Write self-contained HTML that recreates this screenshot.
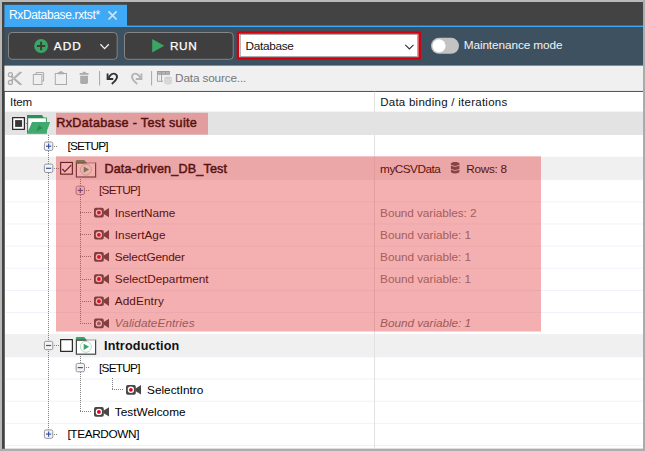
<!DOCTYPE html>
<html><head><meta charset="utf-8"><title>RxDatabase.rxtst</title>
<style>
html,body{margin:0;padding:0}
body{width:645px;height:451px;position:relative;overflow:hidden;background:#b9b9b9;font-family:"Liberation Sans",sans-serif;font-size:12px;color:#1e1e1e}

.t{position:absolute;white-space:nowrap;line-height:16px;height:16px}
svg{position:absolute;left:0;top:0;overflow:visible}
</style></head><body>
<svg width="645" height="451" viewBox="0 0 645 451">
<rect x="643.00" y="0.00" width="2.00" height="451.00" fill="#ababab"/>
<rect x="0.00" y="448.80" width="645.00" height="2.20" fill="#adadad"/>
<rect x="2.00" y="2.00" width="641.00" height="446.80" fill="#434343"/>
<rect x="4.40" y="4.80" width="122.60" height="22.00" fill="#3fa9f5"/>
<rect x="4.40" y="25.60" width="638.60" height="1.40" fill="#3fa9f5"/>
<rect x="4.40" y="27.00" width="638.60" height="38.60" fill="#3e5161"/>
<rect x="4.40" y="65.60" width="638.60" height="25.50" fill="#f0f0f0"/>
<rect x="4.40" y="90.95" width="638.60" height="1.05" fill="#585858"/>
<rect x="4.80" y="92.00" width="638.20" height="356.80" fill="#fff"/>
<rect x="5.00" y="111.60" width="638.00" height="23.40" fill="#e3e3e3"/>
<rect x="5.00" y="156.70" width="638.00" height="23.30" fill="#f0f0f0"/>
<rect x="5.00" y="334.10" width="638.00" height="23.00" fill="#f0f0f0"/>
<rect x="6.00" y="179.15" width="637.00" height="1.00" fill="#f0f2fa"/>
<rect x="6.00" y="201.30" width="637.00" height="1.00" fill="#f0f2fa"/>
<rect x="6.00" y="223.45" width="637.00" height="1.00" fill="#f0f2fa"/>
<rect x="6.00" y="245.60" width="637.00" height="1.00" fill="#f0f2fa"/>
<rect x="6.00" y="267.75" width="637.00" height="1.00" fill="#f0f2fa"/>
<rect x="6.00" y="289.90" width="637.00" height="1.00" fill="#f0f2fa"/>
<rect x="6.00" y="312.05" width="637.00" height="1.00" fill="#f0f2fa"/>
<rect x="6.00" y="356.35" width="637.00" height="1.00" fill="#f0f2fa"/>
<rect x="6.00" y="378.50" width="637.00" height="1.00" fill="#f0f2fa"/>
<rect x="6.00" y="400.65" width="637.00" height="1.00" fill="#f0f2fa"/>
<rect x="6.00" y="422.80" width="637.00" height="1.00" fill="#f0f2fa"/>
<rect x="6.00" y="444.95" width="637.00" height="1.00" fill="#f0f2fa"/>
<rect x="374.00" y="91.70" width="1.00" height="357.10" fill="#e2e2e2"/>
<rect x="8.5" y="32.5" width="108.7" height="26.8" rx="3.5" fill="#3f3f3f" stroke="#858585"/>
<rect x="124.5" y="32.5" width="108.7" height="26.8" rx="3.5" fill="#3f3f3f" stroke="#858585"/>
<path d="M108.5 11.4 L116.6 19.5 M116.6 11.4 L108.5 19.5" stroke="rgba(255,255,255,.72)" stroke-width="1.7" fill="none"/>
<circle cx="41.1" cy="46" r="6.9" fill="#3aa565"/>
<path d="M41.1 41.8 V50.2 M36.9 46 H45.3" stroke="#3a3f3c" stroke-width="2" fill="none"/>
<path d="M100.4 44.3 L104.6 48.6 L108.8 44.3" stroke="#f0f0f0" stroke-width="1.3" fill="none"/>
<path d="M152.2 39 L164.2 45.8 L152.2 52.6 Z" fill="#3aa565"/>
<rect x="238" y="32.6" width="181.6" height="25.8" fill="#fff" stroke="#d4000c" stroke-width="2.5"/>
<rect x="240.3" y="34.4" width="177.3" height="22" fill="#fff" stroke="#9a9a9a" stroke-width="0.8"/>
<path d="M405.3 44.8 L409.4 49 L413.5 44.8" stroke="#333" stroke-width="1.1" fill="none"/>
<rect x="431" y="37.8" width="28" height="16" rx="8" fill="#c3c3c3"/>
<circle cx="439" cy="45.8" r="6.6" fill="#fff"/>
<g stroke="#ababab" fill="none" stroke-width="1.3"><circle cx="10.4" cy="74.7" r="2"/><circle cx="10.4" cy="82.4" r="2"/><path d="M11.6 75.6 L21.9 84.6 L19.6 84.6 L10.8 76.8 Z M11.6 81.4 L21.9 72.2 L19.6 72.2 L10.8 80.2 Z" fill="#ababab" stroke-width="0.6"/></g>
<g stroke="#ababab" fill="none" stroke-width="1"><path d="M36 74 V72.6 H43.6 V81 H42.2"/><rect x="33.3" y="74.5" width="8.6" height="10"/></g>
<g stroke="#ababab" fill="none" stroke-width="1"><rect x="55.3" y="73.5" width="11.2" height="11"/><path d="M58 74 V72.6 H59.8 V71.6 H62 V72.6 H63.8 V74 Z" fill="#ababab" stroke-width="0.6"/></g>
<g fill="#ababab"><rect x="82.8" y="71.8" width="3" height="1.6"/><rect x="79.6" y="73" width="9" height="1.8" rx="0.5"/><path d="M80.2 75.8 H88 V82.6 Q88 84 86.6 84 H81.6 Q80.2 84 80.2 82.6 Z"/></g>
<rect x="99.1" y="71" width="1" height="14.5" fill="#a6a6a6"/><rect x="151.1" y="71" width="1" height="14.5" fill="#a6a6a6"/>
<path d="M107.6 73.6 V79 H113.2" stroke="#333" stroke-width="1.9" fill="none"/>
<path d="M108.6 78 C110.5 74.2 113.3 73 115.3 74 C118.2 75.6 117.6 79.6 111.8 84" stroke="#333" stroke-width="1.9" fill="none"/>
<path d="M141.4 73.6 V79 H135.8" stroke="#b4b4b4" stroke-width="1.9" fill="none"/>
<path d="M140.4 78 C138.5 74.2 135.7 73 133.7 74 C130.8 75.6 131.4 79.6 137.2 84" stroke="#b4b4b4" stroke-width="1.9" fill="none"/>
<g><rect x="157" y="71" width="12.9" height="3.8" fill="#9c9c9c"/><rect x="158" y="72" width="3" height="1.9" fill="#b4b4b4"/><rect x="162" y="72" width="3" height="1.9" fill="#b4b4b4"/><rect x="166" y="72" width="3" height="1.9" fill="#b4b4b4"/><path d="M157.45 74.8 V81.3 H163 M161.55 74.8 V81.3" stroke="#9c9c9c" stroke-width="0.9" fill="none"/><path d="M159.5 75 V81" stroke="#d8d8d8" stroke-width="0.6"/><path d="M164 77.8 Q168 75 172 77.8 V83 Q168 86 164 83 Z" fill="#d2d2d2"/><path d="M164 79.2 Q168 81.4 172 79.2 M164 81.6 Q168 83.8 172 81.6" stroke="#e6e6e6" stroke-width="0.7" fill="none"/></g>
<path d="M48.5 135 V434" stroke="#808080" stroke-width="1" stroke-dasharray="1 1" fill="none"/>
<path d="M80.5 179 V323" stroke="#808080" stroke-width="1" stroke-dasharray="1 1" fill="none"/>
<path d="M80.5 356 V412" stroke="#808080" stroke-width="1" stroke-dasharray="1 1" fill="none"/>
<path d="M112.5 378 V390" stroke="#808080" stroke-width="1" stroke-dasharray="1 1" fill="none"/>
<path d="M54 146.5 H58" stroke="#808080" stroke-width="1" stroke-dasharray="1 1" fill="none"/>
<path d="M54 434.5 H58" stroke="#808080" stroke-width="1" stroke-dasharray="1 1" fill="none"/>
<path d="M54 168.5 H59" stroke="#808080" stroke-width="1" stroke-dasharray="1 1" fill="none"/>
<path d="M54 345.5 H59" stroke="#808080" stroke-width="1" stroke-dasharray="1 1" fill="none"/>
<path d="M86 190.5 H90" stroke="#808080" stroke-width="1" stroke-dasharray="1 1" fill="none"/>
<path d="M86 367.5 H90" stroke="#808080" stroke-width="1" stroke-dasharray="1 1" fill="none"/>
<path d="M80 212.5 H91" stroke="#808080" stroke-width="1" stroke-dasharray="1 1" fill="none"/>
<path d="M80 234.5 H91" stroke="#808080" stroke-width="1" stroke-dasharray="1 1" fill="none"/>
<path d="M80 256.5 H91" stroke="#808080" stroke-width="1" stroke-dasharray="1 1" fill="none"/>
<path d="M80 279.5 H91" stroke="#808080" stroke-width="1" stroke-dasharray="1 1" fill="none"/>
<path d="M80 301.5 H91" stroke="#808080" stroke-width="1" stroke-dasharray="1 1" fill="none"/>
<path d="M80 323.5 H91" stroke="#808080" stroke-width="1" stroke-dasharray="1 1" fill="none"/>
<path d="M80 411.5 H91" stroke="#808080" stroke-width="1" stroke-dasharray="1 1" fill="none"/>
<path d="M112 389.5 H123" stroke="#808080" stroke-width="1" stroke-dasharray="1 1" fill="none"/>
<path d="M26 123.5 H27" stroke="#808080" stroke-width="1" stroke-dasharray="1 1" fill="none"/>
<rect x="44.4" y="142.0" width="8.4" height="8.4" rx="1.5" fill="#f4f4f4" stroke="#969696" stroke-width="1"/>
<path d="M46.0 146.2 H51.2" stroke="#3554b0" stroke-width="1.2"/>
<path d="M48.6 143.6 V148.8" stroke="#3554b0" stroke-width="1.2"/>
<rect x="44.4" y="164.1" width="8.4" height="8.4" rx="1.5" fill="#f4f4f4" stroke="#969696" stroke-width="1"/>
<path d="M46.0 168.3 H51.2" stroke="#3554b0" stroke-width="1.2"/>
<rect x="44.4" y="341.3" width="8.4" height="8.4" rx="1.5" fill="#f4f4f4" stroke="#969696" stroke-width="1"/>
<path d="M46.0 345.5 H51.2" stroke="#3554b0" stroke-width="1.2"/>
<rect x="44.4" y="429.9" width="8.4" height="8.4" rx="1.5" fill="#f4f4f4" stroke="#969696" stroke-width="1"/>
<path d="M46.0 434.1 H51.2" stroke="#3554b0" stroke-width="1.2"/>
<path d="M48.6 431.5 V436.7" stroke="#3554b0" stroke-width="1.2"/>
<rect x="76.1" y="186.2" width="8.4" height="8.4" rx="1.5" fill="#f4f4f4" stroke="#969696" stroke-width="1"/>
<path d="M77.7 190.4 H82.89999999999999" stroke="#3554b0" stroke-width="1.2"/>
<path d="M80.3 187.8 V193.0" stroke="#3554b0" stroke-width="1.2"/>
<rect x="76.1" y="363.4" width="8.4" height="8.4" rx="1.5" fill="#f4f4f4" stroke="#969696" stroke-width="1"/>
<path d="M77.7 367.6 H82.89999999999999" stroke="#3554b0" stroke-width="1.2"/>
<rect x="12.65" y="117.65" width="11.7" height="11.7" fill="#fff" stroke="#1c1c1c" stroke-width="1.15"/>
<rect x="15.1" y="120.1" width="7" height="6.8" fill="#383838"/>
<rect x="60.65" y="162.45" width="11.7" height="11.7" fill="#fff" stroke="#1c1c1c" stroke-width="1.15"/>
<path d="M62.4 169.0 L64.8 171.6 L71.2 165.1" stroke="#222" stroke-width="1.3" fill="none"/>
<rect x="60.65" y="339.65" width="11.7" height="11.7" fill="#fff" stroke="#1c1c1c" stroke-width="1.15"/>
<path d="M27 115.0 H42 L43.6 117.4 H46.8 V133.6 H27 Z" fill="#2c8f56"/>
<rect x="28.2" y="118.3" width="17.7" height="13" fill="#fff"/>
<path d="M32 122.1 H50.2 L46 133.6 H27.2 Z" fill="#3faa6d"/>
<path d="M39 125.1 L42.9 128.2 L36.3 131.3 Z" fill="#2a8c56"/>
<path d="M75.8 162.8 V161.2 Q75.8 159.9 77.1 159.9 H84.3 L86.6 162.8 Z" fill="#3aa565"/>
<rect x="76.4" y="163.0" width="19.2" height="14" fill="#fff" stroke="#454545" stroke-width="1.2"/>
<path d="M86.8 163.0 H95" stroke="#fff" stroke-width="1.3"/><path d="M86.6 162.8 H96" stroke="#b0b0b0" stroke-width="0.8"/>
<circle cx="85.9" cy="169.6" r="5.5" fill="none" stroke="#a9dbbd" stroke-width="0.9"/>
<path d="M83.7 166.5 V172.7 L89.1 169.6 Z" fill="#3aa565"/>
<path d="M75.8 340.0 V338.4 Q75.8 337.1 77.1 337.1 H84.3 L86.6 340.0 Z" fill="#3aa565"/>
<rect x="76.4" y="340.2" width="19.2" height="14" fill="#fff" stroke="#454545" stroke-width="1.2"/>
<path d="M86.8 340.2 H95" stroke="#fff" stroke-width="1.3"/><path d="M86.6 340.0 H96" stroke="#b0b0b0" stroke-width="0.8"/>
<circle cx="85.9" cy="346.8" r="5.5" fill="none" stroke="#a9dbbd" stroke-width="0.9"/>
<path d="M83.7 343.7 V349.9 L89.1 346.8 Z" fill="#3aa565"/>
<rect x="94" y="207.8" width="9.8" height="9.7" rx="1.8" fill="#474747"/>
<path d="M103.4 211.5 L109 207.9 V217.3 L103.4 213.7 Z" fill="#474747"/>
<circle cx="98.9" cy="212.6" r="3.2" fill="#fff"/>
<circle cx="98.9" cy="212.6" r="1.9" fill="#e2001a"/>
<rect x="94" y="229.9" width="9.8" height="9.7" rx="1.8" fill="#474747"/>
<path d="M103.4 233.7 L109 230.1 V239.4 L103.4 235.8 Z" fill="#474747"/>
<circle cx="98.9" cy="234.8" r="3.2" fill="#fff"/>
<circle cx="98.9" cy="234.8" r="1.9" fill="#e2001a"/>
<rect x="94" y="252.1" width="9.8" height="9.7" rx="1.8" fill="#474747"/>
<path d="M103.4 255.8 L109 252.2 V261.6 L103.4 258.0 Z" fill="#474747"/>
<circle cx="98.9" cy="256.9" r="3.2" fill="#fff"/>
<circle cx="98.9" cy="256.9" r="1.9" fill="#e2001a"/>
<rect x="94" y="274.2" width="9.8" height="9.7" rx="1.8" fill="#474747"/>
<path d="M103.4 277.9 L109 274.3 V283.7 L103.4 280.1 Z" fill="#474747"/>
<circle cx="98.9" cy="279.0" r="3.2" fill="#fff"/>
<circle cx="98.9" cy="279.0" r="1.9" fill="#e2001a"/>
<rect x="94" y="296.4" width="9.8" height="9.7" rx="1.8" fill="#474747"/>
<path d="M103.4 300.1 L109 296.5 V305.9 L103.4 302.3 Z" fill="#474747"/>
<circle cx="98.9" cy="301.2" r="3.2" fill="#fff"/>
<circle cx="98.9" cy="301.2" r="1.9" fill="#e2001a"/>
<rect x="94" y="407.1" width="9.8" height="9.7" rx="1.8" fill="#474747"/>
<path d="M103.4 410.8 L109 407.2 V416.6 L103.4 413.1 Z" fill="#474747"/>
<circle cx="98.9" cy="411.9" r="3.2" fill="#fff"/>
<circle cx="98.9" cy="411.9" r="1.9" fill="#e2001a"/>
<rect x="94" y="318.6" width="9.8" height="9.7" rx="1.8" fill="#474747"/>
<path d="M103.4 322.2 L109 318.7 V328.1 L103.4 324.5 Z" fill="#474747"/>
<circle cx="98.9" cy="323.4" r="3.2" fill="#fff"/>
<circle cx="98.9" cy="323.4" r="1.9" fill="#777"/>
<rect x="126" y="385.0" width="9.8" height="9.7" rx="1.8" fill="#474747"/>
<path d="M135.4 388.7 L141 385.1 V394.5 L135.4 390.9 Z" fill="#474747"/>
<circle cx="130.9" cy="389.8" r="3.2" fill="#fff"/>
<circle cx="130.9" cy="389.8" r="1.9" fill="#e2001a"/>
<path d="M450.9 163.6 C450.9 161.3 459.4 161.3 459.4 163.6 V171.8 C459.4 174.1 450.9 174.1 450.9 171.8 Z" fill="#505050"/>
<path d="M450.7 165.2 Q455.15 167.8 459.6 165.2 M450.7 169.3 Q455.15 171.9 459.6 169.3" stroke="#f0f0f0" stroke-width="0.8" fill="none"/>
</svg>
<div class="t" id="tabt" style="left:9.00px;top:7.23px;font-size:12px;color:#fff;letter-spacing:-0.353px;">RxDatabase.rxtst*</div>
<div class="t" id="add" style="left:53.80px;top:38.00px;font-size:11.8px;color:#fff;letter-spacing:1.026px;-webkit-text-stroke:0.25px #fff">ADD</div>
<div class="t" id="run" style="left:169.90px;top:38.00px;font-size:11.8px;color:#fff;letter-spacing:0.613px;-webkit-text-stroke:0.25px #fff">RUN</div>
<div class="t" id="db" style="left:245.50px;top:38.00px;font-size:11.8px;color:#111;letter-spacing:-0.312px;">Database</div>
<div class="t" id="mm" style="left:463.70px;top:37.30px;font-size:11.8px;color:#f2f2f2;letter-spacing:-0.096px;">Maintenance mode</div>
<div class="t" id="ds" style="left:175.10px;top:70.20px;font-size:11.8px;color:#777;letter-spacing:-0.174px;">Data source...</div>
<div class="t" id="hi" style="left:10.10px;top:94.00px;font-size:11.5px;color:#111;letter-spacing:-0.144px;">Item</div>
<div class="t" id="hd" style="left:380.20px;top:94.10px;font-size:11.5px;color:#111;letter-spacing:0.259px;">Data binding / iterations</div>
<div class="t" id="r0" style="left:56.30px;top:115.44px;font-size:12.6px;color:#000;letter-spacing:0.323px;-webkit-text-stroke:0.5px #000">RxDatabase - Test suite</div>
<div class="t" id="r1" style="left:67.40px;top:138.15px;font-size:11.8px;color:#000;letter-spacing:-0.784px;">[SETUP]</div>
<div class="t" id="r2" style="left:104.40px;top:160.64px;font-size:12.6px;color:#000;letter-spacing:0.163px;-webkit-text-stroke:0.5px #000">Data-driven_DB_Test</div>
<div class="t" id="r3" style="left:99.00px;top:182.45px;font-size:11.8px;color:#000;letter-spacing:-0.742px;">[SETUP]</div>
<div class="t" id="r4" style="left:114.80px;top:204.70px;font-size:11.8px;color:#000;letter-spacing:-0.038px;">InsertName</div>
<div class="t" id="r5" style="left:114.80px;top:226.85px;font-size:11.8px;color:#000;letter-spacing:0.022px;">InsertAge</div>
<div class="t" id="r6" style="left:114.80px;top:249.00px;font-size:11.8px;color:#000;letter-spacing:-0.187px;">SelectGender</div>
<div class="t" id="r7" style="left:114.80px;top:271.15px;font-size:11.8px;color:#000;letter-spacing:-0.039px;">SelectDepartment</div>
<div class="t" id="r8" style="left:114.80px;top:293.30px;font-size:11.8px;color:#000;letter-spacing:0.071px;">AddEntry</div>
<div class="t" id="r9" style="left:114.80px;top:315.45px;font-size:11.8px;color:#747474;letter-spacing:0.059px;font-style:italic">ValidateEntries</div>
<div class="t" id="r10" style="left:104.00px;top:337.84px;font-size:12.6px;color:#111;letter-spacing:0.162px;font-weight:bold">Introduction</div>
<div class="t" id="r11" style="left:99.00px;top:359.65px;font-size:11.8px;color:#000;letter-spacing:-0.742px;">[SETUP]</div>
<div class="t" id="r12" style="left:147.10px;top:381.90px;font-size:11.8px;color:#000;letter-spacing:-0.019px;">SelectIntro</div>
<div class="t" id="r13" style="left:114.80px;top:404.05px;font-size:11.8px;color:#000;letter-spacing:0.019px;">TestWelcome</div>
<div class="t" id="r14" style="left:67.40px;top:426.10px;font-size:11.8px;color:#000;letter-spacing:-0.368px;">[TEARDOWN]</div>
<div class="t" id="d2" style="left:380.10px;top:160.80px;font-size:11.8px;color:#000;letter-spacing:-0.523px;">myCSVData</div>
<div class="t" id="d2b" style="left:466.30px;top:160.80px;font-size:11.8px;color:#000;letter-spacing:-0.318px;">Rows: 8</div>
<div class="t" id="d4" style="left:380.10px;top:204.70px;font-size:11.8px;color:#7c7c7c;letter-spacing:-0.073px;">Bound variables: 2</div>
<div class="t" id="d5" style="left:380.10px;top:226.85px;font-size:11.8px;color:#7c7c7c;letter-spacing:-0.055px;">Bound variable: 1</div>
<div class="t" id="d6" style="left:380.10px;top:249.00px;font-size:11.8px;color:#7c7c7c;letter-spacing:-0.055px;">Bound variable: 1</div>
<div class="t" id="d7" style="left:380.10px;top:271.15px;font-size:11.8px;color:#7c7c7c;letter-spacing:-0.055px;">Bound variable: 1</div>
<div class="t" id="d9" style="left:380.10px;top:315.45px;font-size:11.8px;color:#747474;letter-spacing:-0.055px;font-style:italic">Bound variable: 1</div>
<svg width="645" height="451" viewBox="0 0 645 451" fill="rgba(226,48,48,.38)"><rect x="56.00" y="112.80" width="152.00" height="21.80"/><rect x="56.00" y="156.30" width="485.00" height="175.20"/></svg>
</body></html>
